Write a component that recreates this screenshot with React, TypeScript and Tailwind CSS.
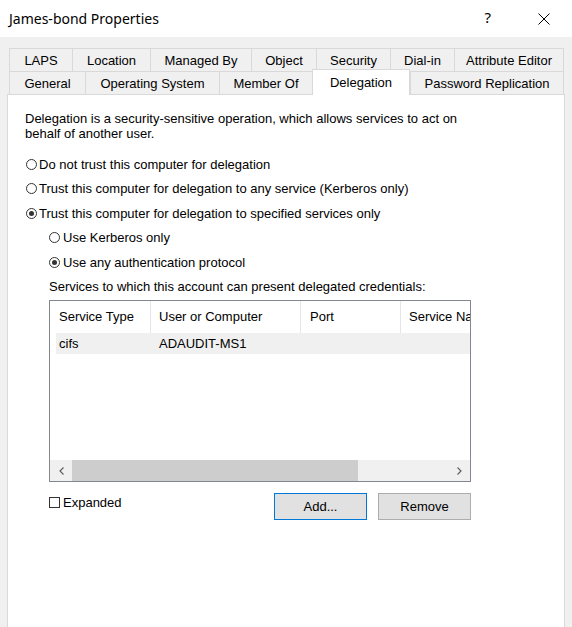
import React from "react";

const Radio = ({ checked }: { checked?: boolean }) => (
  <span className="w-[11px] h-[11px] rounded-full border border-[#333333] bg-white flex items-center justify-center shrink-0">
    {checked && <span className="w-[5px] h-[5px] rounded-full bg-[#333333]" />}
  </span>
);

const RadioRow = ({ label, checked, indent }: { label: string; checked?: boolean; indent?: boolean }) => (
  <div className={`h-[24.5px] flex items-center ${indent ? "pl-[24px] gap-[3px]" : "pl-px gap-[2px]"}`}>
    <Radio checked={checked} />
    <span>{label}</span>
  </div>
);

const Tab = ({ label, w, last }: { label: string; w: string; last?: boolean }) => (
  <div
    className={`${w} h-[23px] border-t border-l ${last ? "border-r" : ""} border-[#d9d9d9] bg-[#f0f0f0] flex items-center justify-center shrink-0 whitespace-nowrap pt-px`}
  >
    {label}
  </div>
);

export default function App() {
  return (
    <div className="w-[572px] h-[627px] bg-[#f0f0f0] overflow-hidden flex flex-col text-[13px] text-black font-['Liberation_Sans',Arial,sans-serif]">
      {/* Title bar */}
      <div className="h-[37px] bg-white flex items-center shrink-0">
        <span className="ml-[9px] text-[14px] font-['Noto_Sans',sans-serif] -mt-[1px]">James-bond Properties</span>
        <span className="ml-auto mr-[47px] text-[15px] font-['Noto_Sans',sans-serif] -mt-[2px]">?</span>
        <svg width="12" height="12" viewBox="0 0 12 12" className="mr-[22px]">
          <path d="M0.5 0.5 L11.5 11.5 M11.5 0.5 L0.5 11.5" stroke="#000" strokeWidth="1" fill="none" />
        </svg>
      </div>

      {/* Tabs */}
      <div className="pl-[9px] pt-[11px] flex flex-col shrink-0">
        <div className="flex h-[23px]">
          <Tab label="LAPS" w="w-[63px]" />
          <Tab label="Location" w="w-[78px]" />
          <Tab label="Managed By" w="w-[101px]" />
          <Tab label="Object" w="w-[65px]" />
          <Tab label="Security" w="w-[74px]" />
          <Tab label="Dial-in" w="w-[64px]" />
          <Tab label="Attribute Editor" w="w-[110px]" last />
        </div>
        <div className="flex h-[23px]">
          <Tab label="General" w="w-[76px]" />
          <Tab label="Operating System" w="w-[134px]" />
          <Tab label="Member Of" w="w-[93px]" />
          <div className="relative z-10 w-[98px] h-[26px] -mt-[2px] bg-white border-t border-l border-r border-[#d9d9d9] flex items-start justify-center pt-[3px] shrink-0">
            Delegation
          </div>
          <Tab label="Password Replication" w="w-[154px]" last />
        </div>
      </div>

      {/* Panel */}
      <div className="ml-[7px] w-[558px] flex-1 bg-white border border-[#d9d9d9] border-b-0 pl-[17px] pt-[16px] flex flex-col">
        <p className="leading-[15px]">
          Delegation is a security-sensitive operation, which allows services to act on
          <br />
          behalf of another user.
        </p>
        <div className="mt-[11px] flex flex-col">
          <RadioRow label="Do not trust this computer for delegation" />
          <RadioRow label="Trust this computer for delegation to any service (Kerberos only)" />
          <RadioRow label="Trust this computer for delegation to specified services only" checked />
          <RadioRow label="Use Kerberos only" indent />
          <RadioRow label="Use any authentication protocol" checked indent />
          <div className="h-[24.5px] flex items-center pl-[24px]">
            Services to which this account can present delegated credentials:
          </div>
        </div>

        {/* List view */}
        <div className="ml-[24px] mt-px w-[422px] h-[182px] border border-[#828790] bg-white flex flex-col overflow-hidden">
          <div className="h-[32px] flex items-center shrink-0 whitespace-nowrap">
            <div className="w-[101px] h-full flex items-center pl-[9px] border-r border-[#e5e5e5]">Service Type</div>
            <div className="w-[150px] h-full flex items-center pl-[8px] border-r border-[#e5e5e5]">User or Computer</div>
            <div className="w-[100px] h-full flex items-center pl-[9px] border-r border-[#e5e5e5]">Port</div>
            <div className="flex-1 h-full flex items-center pl-[8px] overflow-hidden">Service Name</div>
          </div>
          <div className="ml-[6px] h-[21px] bg-[#f0f0f0] flex items-center shrink-0 whitespace-nowrap">
            <div className="w-[95px] pl-[3px]">cifs</div>
            <div className="pl-[8px]">ADAUDIT-MS1</div>
          </div>
          <div className="flex-1" />
          <div className="h-[21px] bg-[#f0f0f0] flex shrink-0">
            <div className="w-[22px] flex items-center justify-center">
              <svg width="5" height="8" viewBox="0 0 5 8">
                <path d="M4.5 0.5 L1 4 L4.5 7.5" stroke="#606060" strokeWidth="1.2" fill="none" />
              </svg>
            </div>
            <div className="w-[286px] bg-[#cdcdcd]" />
            <div className="flex-1" />
            <div className="w-[22px] flex items-center justify-center">
              <svg width="5" height="8" viewBox="0 0 5 8">
                <path d="M0.5 0.5 L4 4 L0.5 7.5" stroke="#606060" strokeWidth="1.2" fill="none" />
              </svg>
            </div>
          </div>
        </div>

        {/* Bottom row */}
        <div className="ml-[24px] mt-[11px] w-[422px] flex items-start">
          <div className="h-[19px] flex items-center gap-[3px]">
            <span className="w-[11px] h-[11px] border border-[#333333] bg-white shrink-0" />
            <span>Expanded</span>
          </div>
          <button className="ml-auto w-[93px] h-[27px] bg-[#e1e1e1] border border-[#0078d7] flex items-center justify-center">
            Add...
          </button>
          <button className="ml-[11px] w-[93px] h-[27px] bg-[#e1e1e1] border border-[#adadad] flex items-center justify-center">
            Remove
          </button>
        </div>
      </div>
    </div>
  );
}
